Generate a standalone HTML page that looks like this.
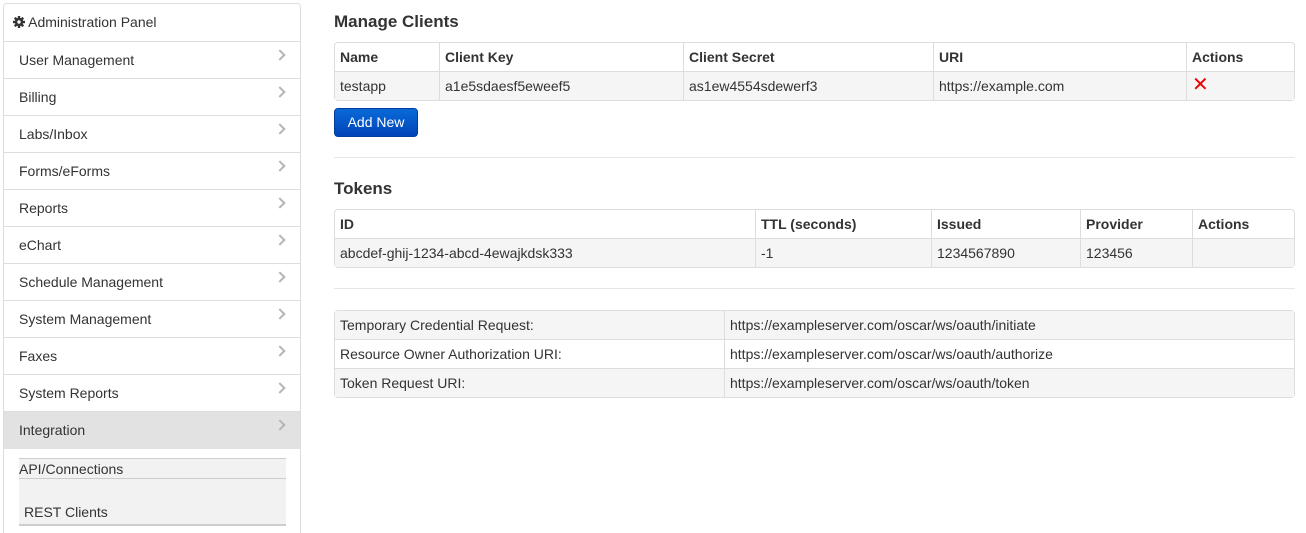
<!DOCTYPE html>
<html><head><style>
html,body{margin:0;width:1306px;height:533px;overflow:hidden}
body{font-family:"Liberation Sans",Arial,sans-serif;font-size:14px;color:#333;background:#fff;position:relative}
.side{position:absolute;left:3px;top:3px;width:298px;height:540px;border:1px solid #ddd;border-radius:4px;box-sizing:border-box}
.side .it{height:37px;border-bottom:1px solid #ddd;box-sizing:border-box;padding:10px 0 0 15px;position:relative}
.side .hd{height:38px;padding:10px 0 0 9px}
.side .it .ch{position:absolute;right:16px;top:9px;width:6px;height:6px;border-right:2px solid #b5b5b5;border-top:2px solid #b5b5b5;transform:rotate(45deg)}
.side .act{background:#e2e2e2}
.sub{position:absolute;left:15px;width:267px;background:#f2f2f2;border-top:1px solid #ccc;box-sizing:border-box}
h3{position:absolute;margin:0;font-size:17px;font-weight:bold;left:334px}
table{position:absolute;left:334px;border-collapse:separate;border-spacing:0;border:1px solid #ddd;border-radius:4px;width:961px}
td,th{border-left:1px solid #ddd;border-top:1px solid #ddd;height:29px;padding:0 5px;text-align:left;box-sizing:border-box}
tr td:first-child,tr th:first-child{border-left:0}
tr:first-child td,tr:first-child th{border-top:0;height:28px}
.g td{background:#f5f5f5}
.btn{position:absolute;left:334px;top:108px;width:84px;height:29px;border-radius:4px;background:linear-gradient(#0a6ad8,#0044b8);color:#fff;font-size:14px;text-align:center;line-height:27px;border:1px solid #003e9e;box-sizing:border-box}
hr{position:absolute;left:334px;width:961px;border:0;border-top:1px solid #e6e6e6;margin:0}
</style></head><body>
<div class="side">
<div class="it hd"><svg width="12" height="12" viewBox="0 0 12 12" style="vertical-align:-1px"><g fill="#333"><circle cx="6" cy="6" r="4.2"/><rect x="4.8" y="0" width="2.4" height="12"/><rect x="0" y="4.8" width="12" height="2.4"/><rect x="4.8" y="0" width="2.4" height="12" transform="rotate(45 6 6)"/><rect x="4.8" y="0" width="2.4" height="12" transform="rotate(-45 6 6)"/></g><circle cx="6" cy="6" r="1.7" fill="#fff"/></svg> Administration Panel</div>
<div class="it">User Management<span class="ch"></span></div>
<div class="it">Billing<span class="ch"></span></div>
<div class="it">Labs/Inbox<span class="ch"></span></div>
<div class="it">Forms/eForms<span class="ch"></span></div>
<div class="it">Reports<span class="ch"></span></div>
<div class="it">eChart<span class="ch"></span></div>
<div class="it">Schedule Management<span class="ch"></span></div>
<div class="it">System Management<span class="ch"></span></div>
<div class="it">Faxes<span class="ch"></span></div>
<div class="it">System Reports<span class="ch"></span></div>
<div class="it act" style="border-bottom:0">Integration<span class="ch"></span></div>
<div class="sub" style="top:454px;height:21px;padding:2px 0 0 0;border-bottom:1px solid #ccc">API/Connections</div>
<div class="sub" style="top:475px;height:47px;padding:25px 0 0 5px;border-top:0;border-bottom:2px solid #ccc">REST Clients</div>
</div>
<h3 style="top:12px">Manage Clients</h3>
<table style="top:42px">
<tr><th style="width:104px">Name</th><th style="width:244px">Client Key</th><th style="width:250px">Client Secret</th><th style="width:253px">URI</th><th>Actions</th></tr>
<tr class="g"><td>testapp</td><td>a1e5sdaesf5eweef5</td><td>as1ew4554sdewerf3</td><td>https://example.com</td><td><span style="color:#e00;font-size:20px;line-height:14px">✕</span></td></tr>
</table>
<div class="btn">Add New</div>
<hr style="top:157px">
<h3 style="top:179px">Tokens</h3>
<table style="top:209px">
<tr><th style="width:420px">ID</th><th style="width:176px">TTL (seconds)</th><th style="width:149px">Issued</th><th style="width:112px">Provider</th><th>Actions</th></tr>
<tr class="g"><td>abcdef-ghij-1234-abcd-4ewajkdsk333</td><td>-1</td><td>1234567890</td><td>123456</td><td></td></tr>
</table>
<hr style="top:288px">
<table style="top:310px">
<tr class="g"><td style="width:389px">Temporary Credential Request:</td><td>https://exampleserver.com/oscar/ws/oauth/initiate</td></tr>
<tr><td>Resource Owner Authorization URI:</td><td>https://exampleserver.com/oscar/ws/oauth/authorize</td></tr>
<tr class="g"><td>Token Request URI:</td><td>https://exampleserver.com/oscar/ws/oauth/token</td></tr>
</table>
</body></html>
